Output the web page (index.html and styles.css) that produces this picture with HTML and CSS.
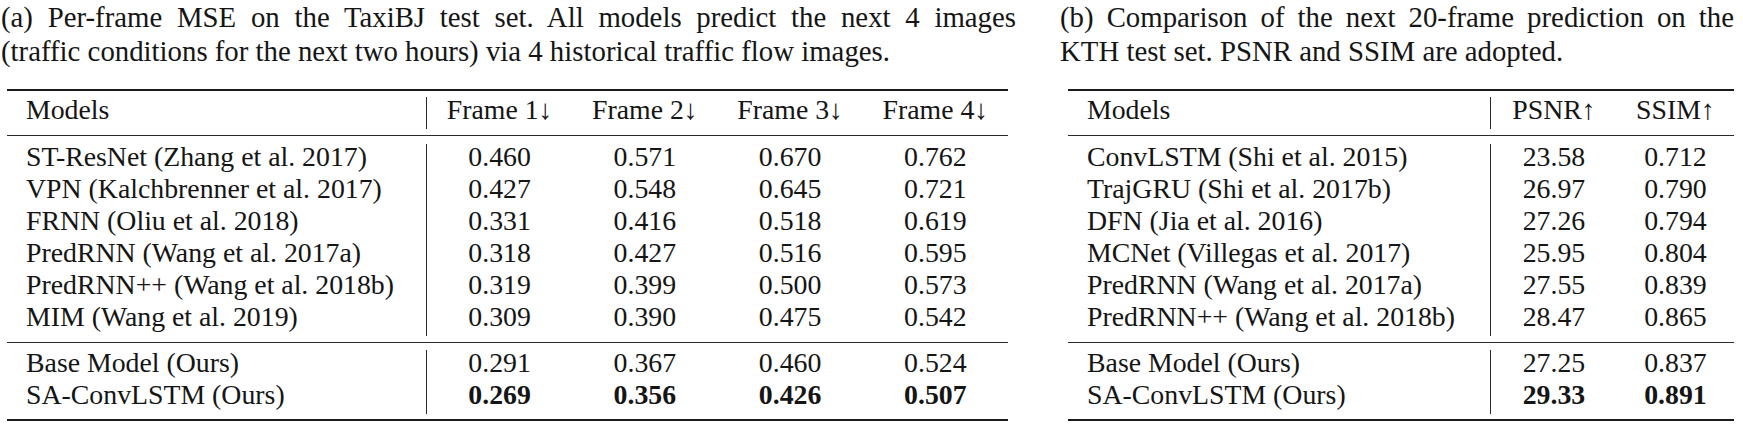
FILE: index.html
```html
<!DOCTYPE html>
<html>
<head>
<meta charset="utf-8">
<link rel="stylesheet" href="styles.css">
</head>
<body>
<div class="page">
  <div class="fig fig-a">
    <div class="caption">
      <div class="cap-line cap-just">(a) Per-frame MSE on the TaxiBJ test set. All models predict the next 4 images</div>
      <div class="cap-line">(traffic conditions for the next two hours) via 4 historical traffic flow images.</div>
    </div>
    <div class="tbl tbl-a">
      <div class="sec sec-head">
        <div class="row"><div class="c-name">Models</div><div class="c-num">Frame 1↓</div><div class="c-num">Frame 2↓</div><div class="c-num">Frame 3↓</div><div class="c-num">Frame 4↓</div></div>
      </div>
      <div class="sec sec-body">
        <div class="row"><div class="c-name">ST-ResNet (Zhang et al. 2017)</div><div class="c-num">0.460</div><div class="c-num">0.571</div><div class="c-num">0.670</div><div class="c-num">0.762</div></div>
        <div class="row"><div class="c-name">VPN (Kalchbrenner et al. 2017)</div><div class="c-num">0.427</div><div class="c-num">0.548</div><div class="c-num">0.645</div><div class="c-num">0.721</div></div>
        <div class="row"><div class="c-name">FRNN (Oliu et al. 2018)</div><div class="c-num">0.331</div><div class="c-num">0.416</div><div class="c-num">0.518</div><div class="c-num">0.619</div></div>
        <div class="row"><div class="c-name">PredRNN (Wang et al. 2017a)</div><div class="c-num">0.318</div><div class="c-num">0.427</div><div class="c-num">0.516</div><div class="c-num">0.595</div></div>
        <div class="row"><div class="c-name">PredRNN++ (Wang et al. 2018b)</div><div class="c-num">0.319</div><div class="c-num">0.399</div><div class="c-num">0.500</div><div class="c-num">0.573</div></div>
        <div class="row"><div class="c-name">MIM (Wang et al. 2019)</div><div class="c-num">0.309</div><div class="c-num">0.390</div><div class="c-num">0.475</div><div class="c-num">0.542</div></div>
      </div>
      <div class="sec sec-body sec-last">
        <div class="row"><div class="c-name">Base Model (Ours)</div><div class="c-num">0.291</div><div class="c-num">0.367</div><div class="c-num">0.460</div><div class="c-num">0.524</div></div>
        <div class="row"><div class="c-name">SA-ConvLSTM (Ours)</div><div class="c-num b">0.269</div><div class="c-num b">0.356</div><div class="c-num b">0.426</div><div class="c-num b">0.507</div></div>
      </div>
    </div>
  </div>
  <div class="fig fig-b">
    <div class="caption">
      <div class="cap-line cap-just">(b) Comparison of the next 20-frame prediction on the</div>
      <div class="cap-line">KTH test set. PSNR and SSIM are adopted.</div>
    </div>
    <div class="tbl tbl-b">
      <div class="sec sec-head">
        <div class="row"><div class="c-name">Models</div><div class="c-num">PSNR↑</div><div class="c-num">SSIM↑</div></div>
      </div>
      <div class="sec sec-body">
        <div class="row"><div class="c-name">ConvLSTM (Shi et al. 2015)</div><div class="c-num">23.58</div><div class="c-num">0.712</div></div>
        <div class="row"><div class="c-name">TrajGRU (Shi et al. 2017b)</div><div class="c-num">26.97</div><div class="c-num">0.790</div></div>
        <div class="row"><div class="c-name">DFN (Jia et al. 2016)</div><div class="c-num">27.26</div><div class="c-num">0.794</div></div>
        <div class="row"><div class="c-name">MCNet (Villegas et al. 2017)</div><div class="c-num">25.95</div><div class="c-num">0.804</div></div>
        <div class="row"><div class="c-name">PredRNN (Wang et al. 2017a)</div><div class="c-num">27.55</div><div class="c-num">0.839</div></div>
        <div class="row"><div class="c-name">PredRNN++ (Wang et al. 2018b)</div><div class="c-num">28.47</div><div class="c-num">0.865</div></div>
      </div>
      <div class="sec sec-body sec-last">
        <div class="row"><div class="c-name">Base Model (Ours)</div><div class="c-num">27.25</div><div class="c-num">0.837</div></div>
        <div class="row"><div class="c-name">SA-ConvLSTM (Ours)</div><div class="c-num b">29.33</div><div class="c-num b">0.891</div></div>
      </div>
    </div>
  </div>
</div>
</body>
</html>
```
FILE: styles.css
```css
html, body {
  margin: 0;
  padding: 0;
  background: #ffffff;
}
body {
  font-family: "Liberation Serif", "Times New Roman", serif;
  color: #151515;
  width: 1743px;
  height: 429px;
  overflow: hidden;
}
.page {
  display: flex;
  align-items: flex-start;
}
.fig-a {
  margin-left: 1px;
  width: 1015px;
}
.fig-b {
  margin-left: 44px;
  width: 674px;
}
.caption {
  font-size: 28.8px;
  line-height: 34px;
}
.cap-line {
  white-space: nowrap;
}
.cap-just {
  text-align: justify;
  text-align-last: justify;
  white-space: normal;
}
.tbl {
  margin-top: 21px;
  border-top: 2px solid #1a1a1a;
  border-bottom: 2px solid #1a1a1a;
  font-size: 27.8px;
}
.tbl-a {
  margin-left: 6px;
  width: 1001px;
}
.tbl-b {
  margin-left: 8px;
  width: 666px;
}
.sec-head {
  padding: 6px 0 6px;
}
.sec-body {
  border-top: 1px solid #2a2a2a;
  padding: 8px 0 6px;
}
.sec-last {
  padding: 7px 0 5px;
}
.row {
  display: grid;
}
.tbl-a .row {
  grid-template-columns: 420px repeat(4, 1fr);
}
.tbl-b .row {
  grid-template-columns: 423px 126px 1fr;
}
.c-name,
.c-num {
  line-height: 25px;
  padding-bottom: 7px;
  white-space: nowrap;
}
.c-name {
  padding-left: 19px;
  border-right: 1px solid #2a2a2a;
}
.c-num {
  text-align: center;
}
.b {
  font-weight: bold;
}
```
